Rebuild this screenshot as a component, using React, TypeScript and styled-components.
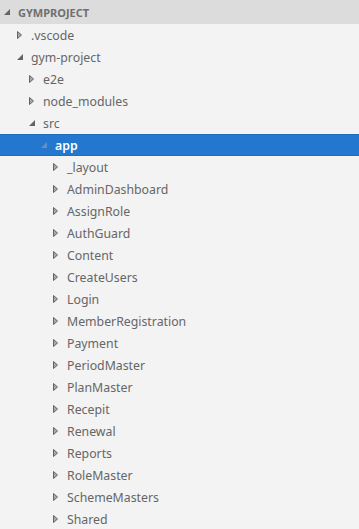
import styled, { createGlobalStyle } from "styled-components";

const GlobalStyle = createGlobalStyle`
  body {
    margin: 0;
    background: #f3f3f3;
    font-family: "Segoe UI", "Noto Sans", "Open Sans", sans-serif;
  }
`;

type Node = { name: string; depth: number; open?: boolean; selected?: boolean };

const nodes: Node[] = [
  { name: ".vscode", depth: 0 },
  { name: "gym-project", depth: 0, open: true },
  { name: "e2e", depth: 1 },
  { name: "node_modules", depth: 1 },
  { name: "src", depth: 1, open: true },
  { name: "app", depth: 2, open: true, selected: true },
  ...[
    "_layout",
    "AdminDashboard",
    "AssignRole",
    "AuthGuard",
    "Content",
    "CreateUsers",
    "Login",
    "MemberRegistration",
    "Payment",
    "PeriodMaster",
    "PlanMaster",
    "Recepit",
    "Renewal",
    "Reports",
    "RoleMaster",
    "SchemeMasters",
    "Shared",
  ].map((name) => ({ name, depth: 3 })),
];

const Twisty = ({ open, dark }: { open?: boolean; dark?: boolean }) => (
  <TwistyBox>
    {open ? (
      <svg width="6" height="6" viewBox="0 0 6 6">
        <path d="M6 0 L6 6 L0 6 Z" fill={dark ? "#6a8fbf" : "#646465"} />
      </svg>
    ) : (
      <svg width="5" height="8" viewBox="0 0 5 8">
        <path d="M0.5 0.5 L4.5 4 L0.5 7.5 Z" fill="#a8a8a8" stroke="#646465" strokeWidth="1" />
      </svg>
    )}
  </TwistyBox>
);

const App = () => (
  <Explorer>
    <GlobalStyle />
    <Header>
      <Twisty open />
      <HeaderTitle>GYMPROJECT</HeaderTitle>
    </Header>
    <Tree>
      {nodes.map((n) => (
        <Row key={n.name} $depth={n.depth} $selected={n.selected}>
          <Twisty open={n.open} dark={n.selected} />
          <Label $selected={n.selected}>{n.name}</Label>
        </Row>
      ))}
    </Tree>
  </Explorer>
);

const Explorer = styled.div`
  width: 359px;
  height: 529px;
  overflow: hidden;
  background: #f3f3f3;
`;

const Header = styled.div`
  height: 24px;
  display: flex;
  align-items: center;
  padding-left: 4px;
  background: #dcdcdc;
`;

const HeaderTitle = styled.span`
  font-size: 11px;
  font-weight: 700;
  color: #6f6f6f;
`;

const Tree = styled.div`
  display: flex;
  flex-direction: column;
`;

const Row = styled.div<{ $depth: number; $selected?: boolean }>`
  height: 22px;
  display: flex;
  align-items: center;
  padding-left: ${(p) => 17 + p.$depth * 12}px;
  background: ${(p) => (p.$selected ? "#2477ce" : "transparent")};
  box-shadow: ${(p) => (p.$selected ? "inset 0 1px 0 #1f6cc0, inset 0 -1px 0 #1f6cc0" : "none")};
`;

const TwistyBox = styled.span`
  width: 14px;
  display: flex;
  align-items: center;
`;

const Label = styled.span<{ $selected?: boolean }>`
  font-size: 12.3px;
  color: ${(p) => (p.$selected ? "#ffffff" : "#666666")};
  font-weight: ${(p) => (p.$selected ? 600 : 400)};
  white-space: nowrap;
`;

export default App;
